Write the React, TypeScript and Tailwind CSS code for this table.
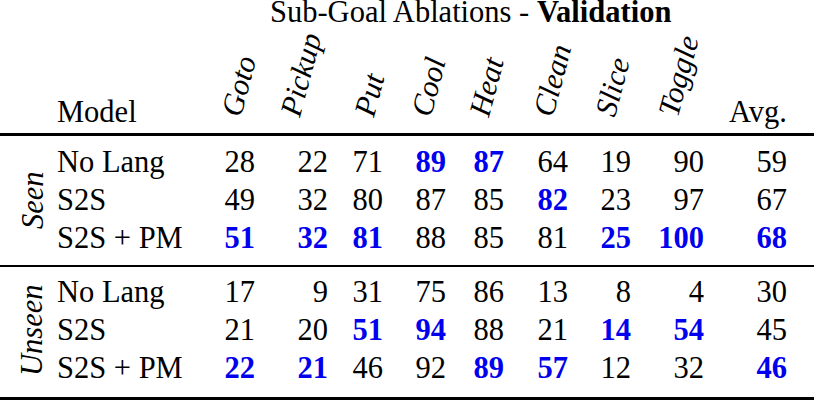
import React from 'react';

const COLS = 'grid grid-cols-[57px_148px_50px_73px_55px_63px_58px_64px_63px_73px_83px]';

const HEADERS = [
  { name: 'Goto', pad: 'pl-[41px]' },
  { name: 'Pickup', pad: 'pl-[50px]' },
  { name: 'Put', pad: 'pl-[51px]' },
  { name: 'Cool', pad: 'pl-[53px]' },
  { name: 'Heat', pad: 'pl-[48px]' },
  { name: 'Clean', pad: 'pl-[54px]' },
  { name: 'Slice', pad: 'pl-[52px]' },
  { name: 'Toggle', pad: 'pl-[52px]' },
];

// a leading * marks the best score of the column
const GROUPS = [
  {
    label: 'Seen',
    pad: 'pt-[7px] pb-[8px] border-t-[3px]',
    rows: [
      { model: 'No Lang', cells: '28 22 71 *89 *87 64 19 90 59' },
      { model: 'S2S', cells: '49 32 80 87 85 *82 23 97 67' },
      { model: 'S2S + PM', cells: '*51 *32 *81 88 85 81 *25 *100 *68' },
    ],
  },
  {
    label: 'Unseen',
    pad: 'pt-[6px] pb-[10px] border-t-2',
    rows: [
      { model: 'No Lang', cells: '17 9 31 75 86 13 8 4 30' },
      { model: 'S2S', cells: '21 20 *51 *94 88 21 *14 *54 45' },
      { model: 'S2S + PM', cells: '*22 *21 46 92 *89 *57 12 32 *46' },
    ],
  },
];

export default function App() {
  return (
    <div className="font-['Liberation_Serif',serif] w-[814px] h-[403px] bg-white text-black text-[30.5px] overflow-hidden">
      <div className="pl-[270px] leading-[24px] whitespace-nowrap">
        Sub-Goal Ablations - <span className="font-bold">Validation</span>
      </div>

      <div className={`${COLS} h-[109px] items-end leading-none`}>
        <div />
        <div className="pb-[6px]">Model</div>
        {HEADERS.map((h) => (
          <div key={h.name} className={`flex items-end h-full ${h.pad}`}>
            <span className="inline-block whitespace-nowrap italic mb-[14px] origin-bottom-left -rotate-75">
              {h.name}
            </span>
          </div>
        ))}
        <div className="pb-[6px] text-right">Avg.</div>
      </div>

      {GROUPS.map((g) => (
        <div key={g.label} className={`border-black ${g.pad}`}>
          <div className={`${COLS} grid-rows-[38px_38px_38px] leading-[38px]`}>
            <div className="row-span-3 flex items-center justify-center pl-[8px]">
              <span className="inline-block italic leading-none whitespace-nowrap -rotate-90">{g.label}</span>
            </div>
            {g.rows.map((r) => (
              <React.Fragment key={r.model}>
                <div className="col-start-2 whitespace-nowrap">{r.model}</div>
                {r.cells.split(' ').map((c, i) => (
                  <div key={i} className={c.startsWith('*') ? 'text-right font-bold text-[#0000ee]' : 'text-right'}>
                    {c.replace('*', '')}
                  </div>
                ))}
              </React.Fragment>
            ))}
          </div>
        </div>
      ))}
      <div className="border-t-[3px] border-black" />
    </div>
  );
}
